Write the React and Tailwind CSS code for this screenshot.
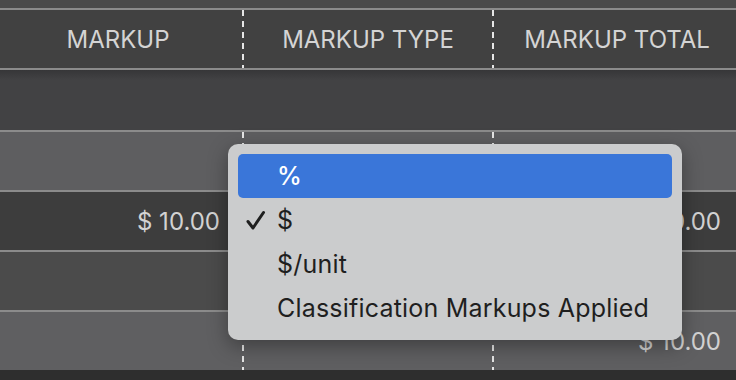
import React from "react";

const dash =
  "bg-[repeating-linear-gradient(to_bottom,#e6e6e6_0px,#e6e6e6_6px,transparent_6px,transparent_11px)]";

function Divider({ show }) {
  return <div className={show ? dash : ""} />;
}

function Row({ bg, left, right, dashes }) {
  return (
    <div className={`grid grid-cols-[242px_2px_248px_2px_242px] h-[58px] ${bg}`}>
      <div className="flex items-center justify-end pr-[22px] pt-[1px] text-[#d2d2d2]">{left}</div>
      <Divider show={dashes} />
      <div />
      <Divider show={dashes} />
      <div className="flex items-center justify-end pr-[15px] pt-[1px] text-[#d2d2d2]">{right}</div>
    </div>
  );
}

const Line = () => <div className="h-[2px] bg-[#8b8b8b]" />;

export default function App() {
  return (
    <div
      className="relative w-[736px] h-[380px] overflow-hidden bg-[#2e2e2e] text-[24px]"
      style={{ fontFamily: "Inter, 'Noto Sans', sans-serif" }}
    >
      <div className="h-[8px] bg-[#4a4a4a]" />
      <Line />
      <div className="grid grid-cols-[242px_2px_248px_2px_242px] h-[58px] bg-[#414141] text-[#d4d4d4]">
        <div className="flex items-center justify-center pr-[6px] pt-[2px]">MARKUP</div>
        <Divider show />
        <div className="flex items-center justify-center pt-[2px]">MARKUP TYPE</div>
        <Divider show />
        <div className="flex items-center justify-center pl-[4px] pt-[2px]">MARKUP TOTAL</div>
      </div>
      <Line />
      <div className="h-[60px] bg-[linear-gradient(to_bottom,#363638_0px,#424244_10px,#424244_100%)]" />
      <Line />
      <Row bg="bg-[#5e5e60]" dashes />
      <Line />
      <Row bg="bg-[#3d3d3d]" left="$ 10.00" right="$ 10.00" />
      <Line />
      <Row bg="bg-[#4b4b4b]" />
      <Line />
      <Row bg="bg-[#5f5f61]" right="$ 10.00" dashes />

      <div className="absolute left-[228px] top-[144px] w-[454px] h-[196px] rounded-[10px] bg-[#cbcccd] p-[10px] shadow-[0_6px_20px_rgba(0,0,0,0.35)] text-[#1f1f1f] text-[25px] tracking-[0.2px]">
        <div className="h-[44px] rounded-[5px] bg-[#3a76d9] flex items-center pl-[39px] pt-[2px] text-white font-medium">
          %
        </div>
        <div className="relative h-[44px] flex items-center pl-[39px] pt-[2px]">
          <svg
            className="absolute left-[8px] top-[12px]"
            width="20"
            height="22"
            viewBox="0 0 20 22"
          >
            <path
              d="M2 11.5 L7 18 L17.5 2.5"
              fill="none"
              stroke="#1f1f1f"
              strokeWidth="3"
              strokeLinecap="round"
              strokeLinejoin="round"
            />
          </svg>
          $
        </div>
        <div className="h-[44px] flex items-center pl-[39px] pt-[2px]">$/unit</div>
        <div className="h-[44px] flex items-center pl-[39px] pt-[2px]">Classification Markups Applied</div>
      </div>
    </div>
  );
}
